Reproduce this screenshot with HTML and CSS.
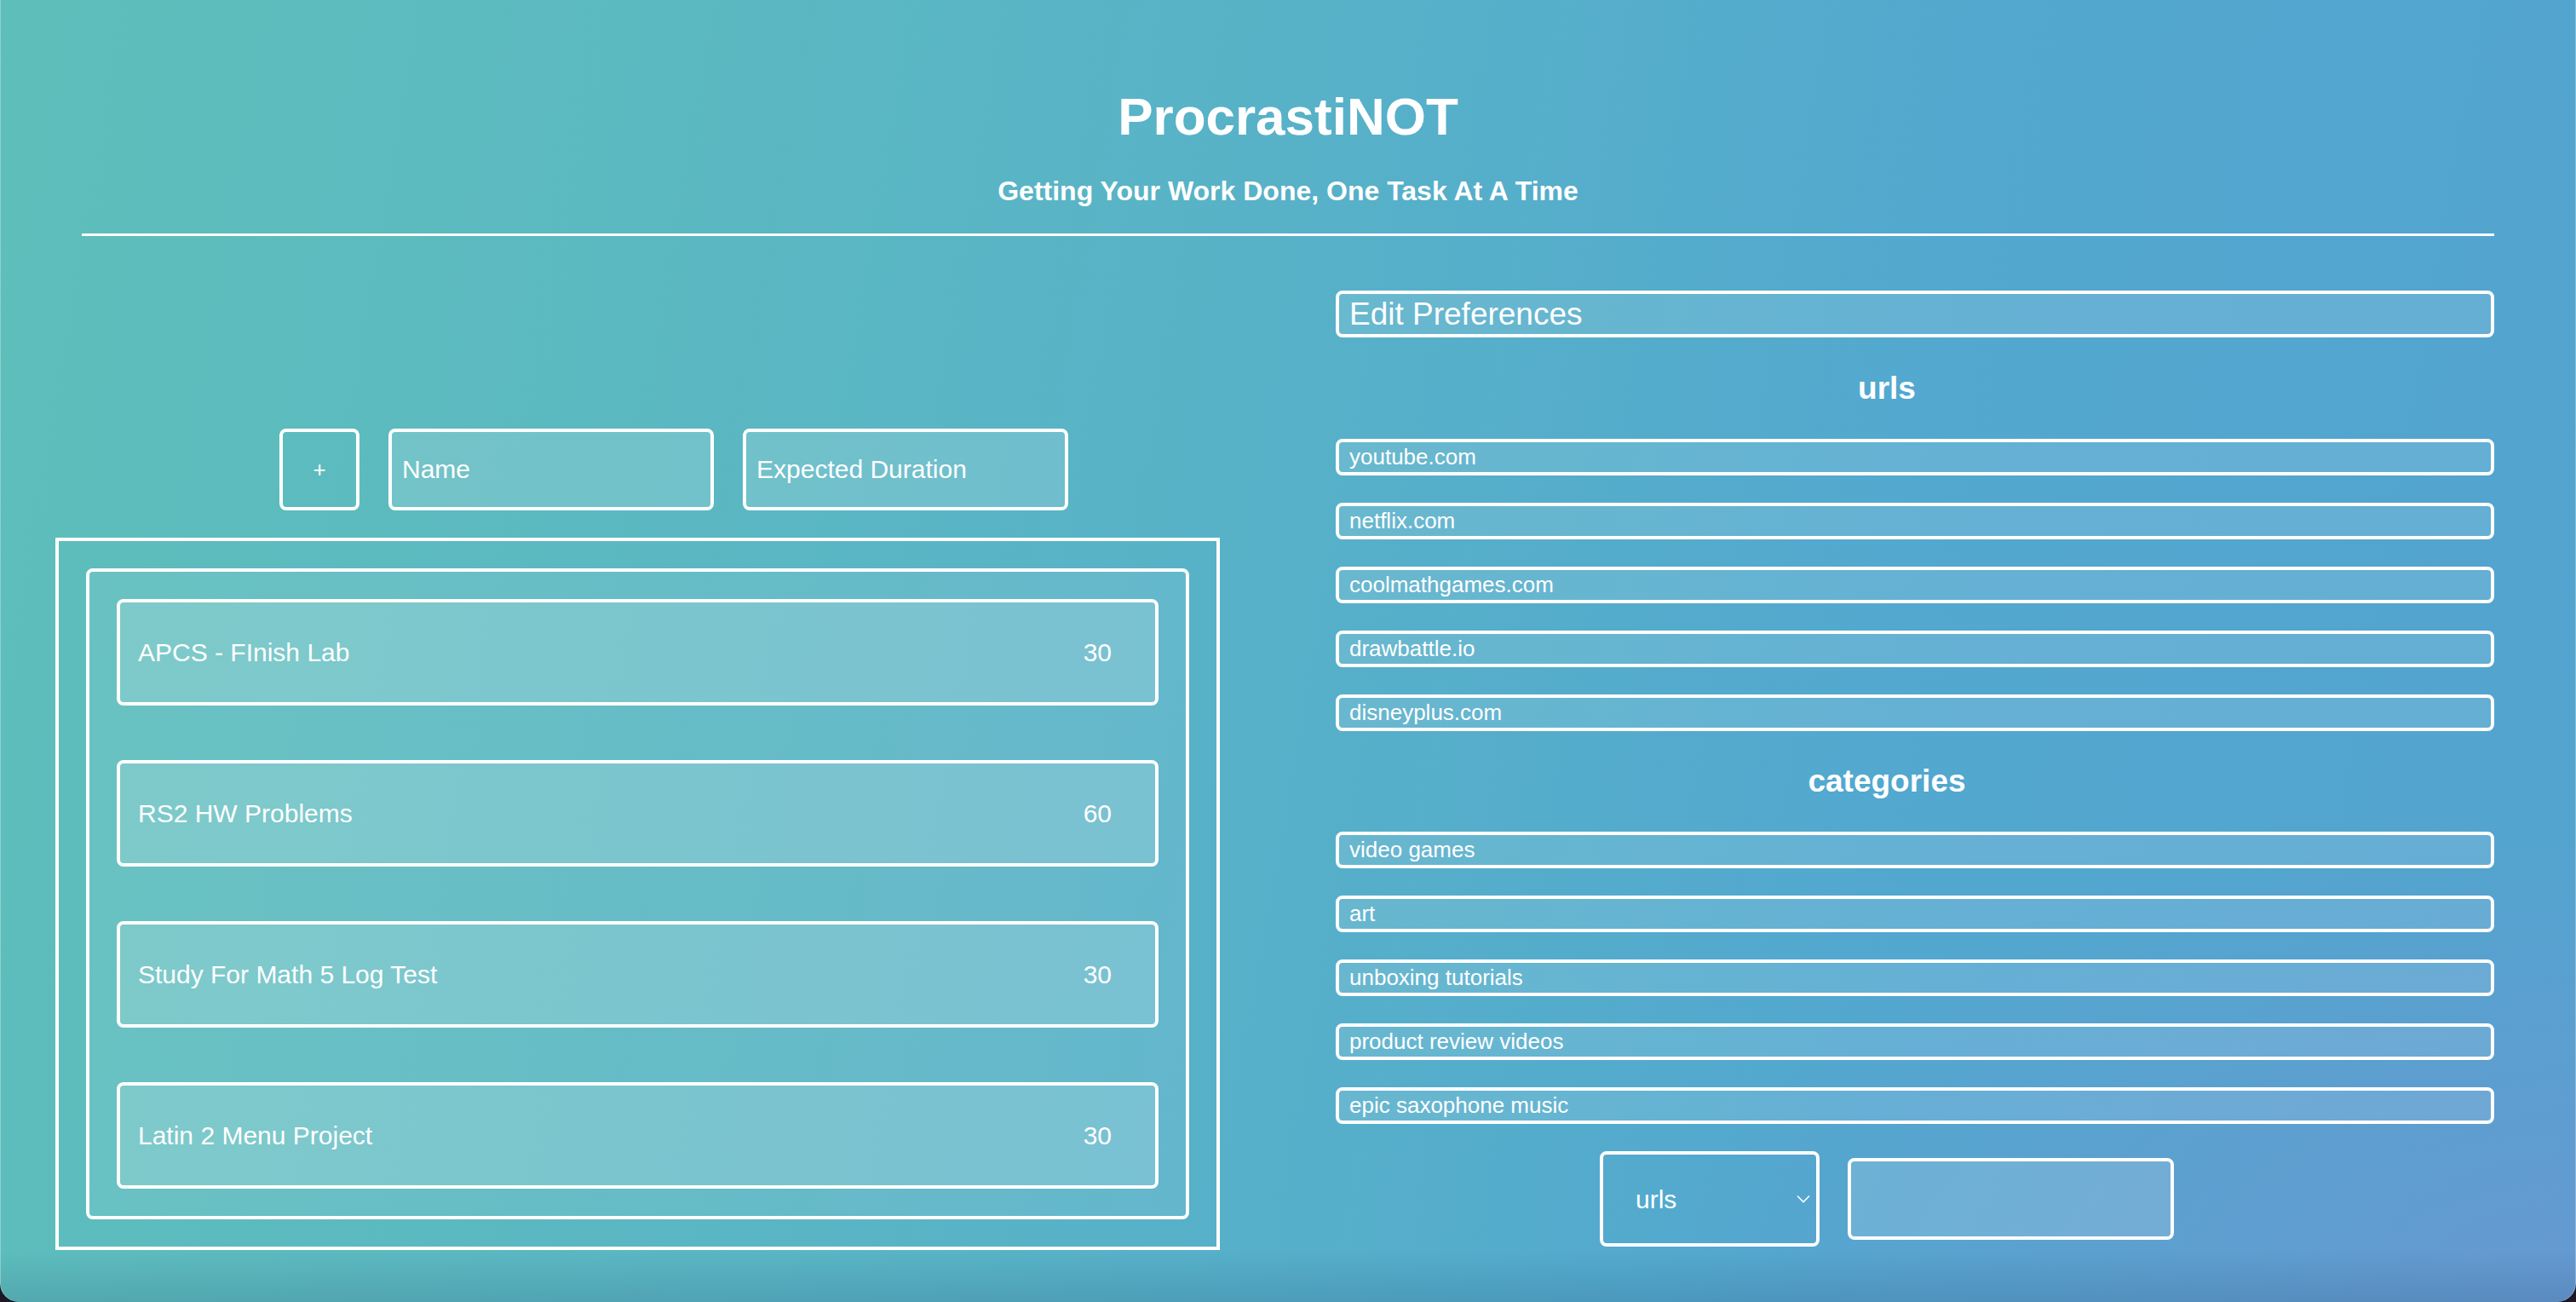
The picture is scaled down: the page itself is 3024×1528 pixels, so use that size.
FILE: index.html
```html
<!DOCTYPE html>
<html>
<head>
    <meta charset="utf-8">
    <title>ProcrastiNOT</title>
    <link rel="stylesheet" href="styles.css">
</head>
<body>
    <div class="app">
        <header class="header">
            <h1 class="title">ProcrastiNOT</h1>
            <h3 class="tagline">Getting Your Work Done, One Task At A Time</h3>
            <div class="rule"></div>
        </header>

        <main class="columns">
            <!-- task side -->
            <section class="tasks-col">
                <form class="task-form">
                    <button type="button" class="add-btn">+</button>
                    <input type="text" class="field" placeholder="Name">
                    <input type="text" class="field" placeholder="Expected Duration">
                </form>
                <div class="task-frame">
                    <div class="task-list">
                        <div class="task"><span>APCS - FInish Lab</span><span>30</span></div>
                        <div class="task"><span>RS2 HW Problems</span><span>60</span></div>
                        <div class="task"><span>Study For Math 5 Log Test</span><span>30</span></div>
                        <div class="task"><span>Latin 2 Menu Project</span><span>30</span></div>
                    </div>
                </div>
            </section>

            <!-- preferences side -->
            <section class="prefs-col">
                <div class="edit-box">Edit Preferences</div>

                <h3 class="pref-heading">urls</h3>
                <div class="pref-list">
                    <input type="text" class="pref-item" value="youtube.com">
                    <input type="text" class="pref-item" value="netflix.com">
                    <input type="text" class="pref-item" value="coolmathgames.com">
                    <input type="text" class="pref-item" value="drawbattle.io">
                    <input type="text" class="pref-item" value="disneyplus.com">
                </div>

                <h3 class="pref-heading">categories</h3>
                <div class="pref-list">
                    <input type="text" class="pref-item" value="video games">
                    <input type="text" class="pref-item" value="art">
                    <input type="text" class="pref-item" value="unboxing tutorials">
                    <input type="text" class="pref-item" value="product review videos">
                    <input type="text" class="pref-item" value="epic saxophone music">
                </div>

                <div class="pref-add">
                    <div class="select-wrap">
                        <select class="pref-type">
                            <option>urls</option>
                            <option>categories</option>
                        </select>
                        <svg class="chevron" width="16" height="10" viewBox="0 0 16 10">
                            <polyline points="1,1.5 8,8.5 15,1.5" fill="none" stroke="#fff" stroke-width="1.6"/>
                        </svg>
                    </div>
                    <input type="text" class="field new-pref">
                </div>
            </section>
        </main>
    </div>
</body>
</html>
```

FILE: styles.css
```css
html {
    background: #1c1826;
}
body {
    margin: 0;
    font-family: "Liberation Sans", Arial, sans-serif;
    color: #fff;
}
.app {
    box-sizing: border-box;
    height: 1528px;
    padding: 106px 96px 0 65px;
    border-radius: 0 0 22px 22px;
    overflow: hidden;
    background:
        linear-gradient(to top, rgba(30, 60, 100, 0.16), rgba(30, 60, 100, 0) 60px),
        radial-gradient(ellipse at 100% 100%, rgba(125, 140, 210, 0.45), rgba(125, 140, 210, 0) 26%),
        linear-gradient(100deg, #5ebfba 0%, #59b5c5 38%, #52a8cf 72%, #53a3cf 100%);
    box-shadow: inset 1px 0 rgba(255, 255, 255, 0.3), inset -1px 0 rgba(255, 255, 255, 0.3);
}

/* header */
.header {
    margin-left: 31px;
    text-align: center;
}
.title {
    margin: 0;
    font-size: 62px;
    line-height: 62px;
    font-weight: bold;
}
.tagline {
    margin: 40px 0 0;
    font-size: 32px;
    line-height: 32px;
    font-weight: bold;
}
.rule {
    margin-top: 34px;
    height: 3px;
    background: #fff;
}

.columns {
    display: flex;
    align-items: flex-end;
    gap: 51px;
    margin-top: 64px;
}

/* tasks */
.tasks-col {
    width: 1452px;
    flex-shrink: 0;
    margin-bottom: -4px;
}
.task-form {
    display: flex;
    justify-content: center;
    align-items: center;
    gap: 34px;
    margin: 0 0 32px;
}
.add-btn {
    box-sizing: border-box;
    width: 94px;
    height: 96px;
    border: 4px solid #fff;
    border-radius: 8px;
    background: transparent;
    color: #fff;
    font-family: inherit;
    font-size: 26px;
    padding: 0;
}
.field {
    box-sizing: border-box;
    width: 382px;
    height: 96px;
    border: 4px solid #fff;
    border-radius: 8px;
    background: rgba(255, 255, 255, 0.14);
    color: #fff;
    font-family: inherit;
    font-size: 30px;
    padding: 0 12px;
    outline: none;
}
.field::placeholder {
    color: #fff;
    opacity: 1;
}
.task-frame {
    width: 1367px;
    box-sizing: border-box;
    border: 4px solid #fff;
    padding: 32px;
}
.task-list {
    display: flex;
    flex-direction: column;
    gap: 64px;
    border: 4px solid #fff;
    border-radius: 8px;
    padding: 32px;
    background: rgba(255, 255, 255, 0.08);
}
.task {
    box-sizing: border-box;
    height: 125px;
    display: flex;
    justify-content: space-between;
    align-items: center;
    padding: 0 51px 0 21px;
    border: 4px solid #fff;
    border-radius: 8px;
    background: rgba(255, 255, 255, 0.14);
    font-size: 30px;
}

/* preferences */
.prefs-col {
    flex: 1;
    display: flex;
    flex-direction: column;
}
.edit-box {
    box-sizing: border-box;
    height: 55px;
    border: 4px solid #fff;
    border-radius: 8px;
    background: rgba(255, 255, 255, 0.11);
    padding: 0 12px;
    font-size: 37px;
    line-height: 47px;
}
.pref-heading {
    margin: 38px 66px 37px 0;
    text-align: center;
    font-size: 37px;
    line-height: 44px;
    font-weight: bold;
}
.pref-list + .pref-heading {
    margin-top: 37px;
}
.pref-list {
    display: flex;
    flex-direction: column;
    gap: 32px;
}
.pref-item {
    box-sizing: border-box;
    height: 43px;
    width: 100%;
    border: 4px solid #fff;
    border-radius: 8px;
    background: rgba(255, 255, 255, 0.11);
    color: #fff;
    font-family: inherit;
    font-size: 26px;
    padding: 0 12px;
    outline: none;
}
.pref-add {
    display: flex;
    justify-content: center;
    align-items: center;
    gap: 33px;
    margin: 32px 66px 0 0;
}
.select-wrap {
    position: relative;
}
.pref-type {
    appearance: none;
    -webkit-appearance: none;
    box-sizing: border-box;
    width: 258px;
    height: 112px;
    border: 4px solid #fff;
    border-radius: 8px;
    background: transparent;
    color: #fff;
    font-family: inherit;
    font-size: 30px;
    padding: 0 0 0 38px;
    outline: none;
}
.chevron {
    position: absolute;
    right: 11px;
    top: 51px;
    pointer-events: none;
}
.new-pref {
    width: 383px;
}
```
